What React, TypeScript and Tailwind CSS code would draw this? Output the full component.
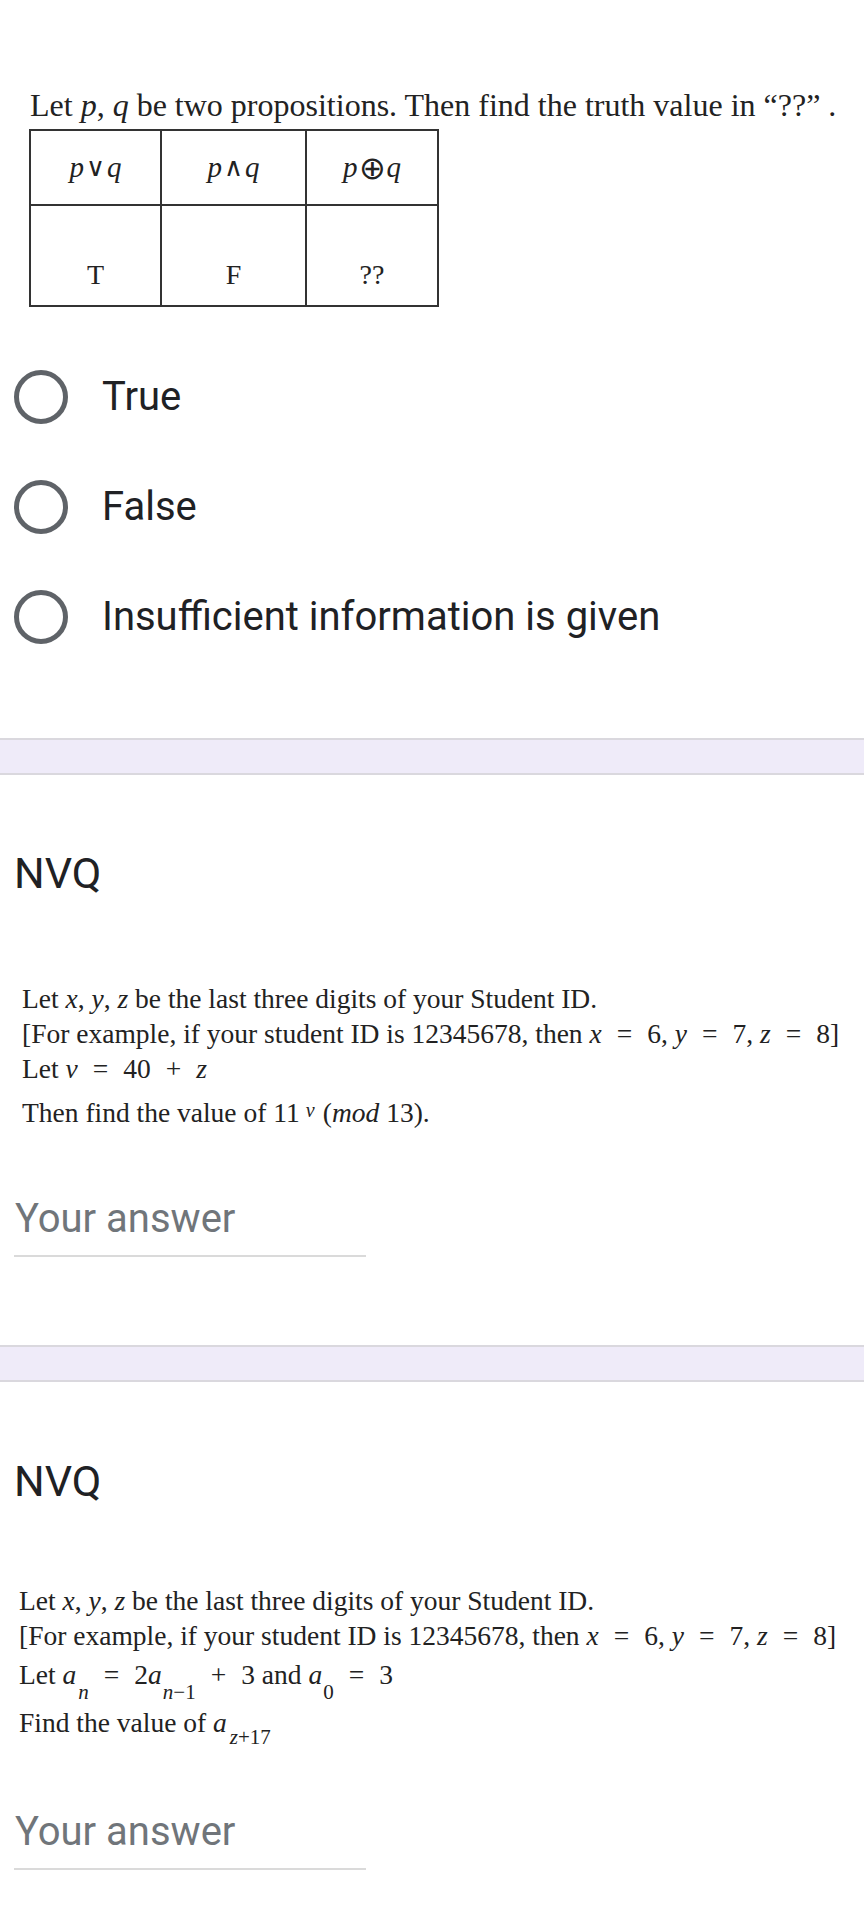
import React from "react";

const serif = "font-['Liberation_Serif','Times_New_Roman',serif]";
const sans = "font-['Roboto','Noto_Sans',sans-serif]";

function Radio({ label }: { label: string }) {
  return (
    <div className="flex items-center h-[54px]">
      <div className="w-[54px] h-[54px] rounded-full border-[5px] border-[#5f6368] shrink-0" />
      <div className={`${sans} ml-[34px] text-[40px] leading-[54px] text-[#202124]`}>{label}</div>
    </div>
  );
}

function Band() {
  return <div className="h-[37px] border-y-2 border-[#dad8de] bg-[#efebf9]" />;
}

function Answer({ className }: { className: string }) {
  return (
    <div className={`${className} ml-[14px] w-[352px] border-b-2 border-[#dadada] pb-[12px]`}>
      <div className={`${sans} text-[40px] leading-[48px] text-[#70757a] pl-[1px]`}>Your answer</div>
    </div>
  );
}

function Title({ className }: { className: string }) {
  return (
    <div className={`${className} ${sans} pl-[14px] text-[43px] leading-[52px] text-[#202124]`}>NVQ</div>
  );
}

function Op({ c }: { c: string }) {
  return <span className="mx-[15px]">{c}</span>;
}

function StudentLines() {
  return (
    <>
      <div>
        Let <i>x</i>, <i>y</i>, <i>z</i> be the last three digits of your Student ID.
      </div>
      <div>
        [For example, if your student ID is 12345678, then <i>x</i>
        <Op c="=" />6, <i>y</i>
        <Op c="=" />7, <i>z</i>
        <Op c="=" />8]
      </div>
    </>
  );
}

export default function App() {
  return (
    <div className="w-[864px] min-h-[1920px] bg-white text-[#202124] pb-[50px]">
      {/* Question 1 */}
      <div className={`${serif} pt-[87px] pl-[30px] text-[32px] leading-[36px] text-[#222]`}>
        Let <i>p</i>, <i>q</i> be two propositions. Then find the truth value in “??” .
      </div>
      <div className={`${serif} ml-[29px] mt-[6px] w-[410px] border-2 border-[#333] grid grid-cols-[131px_145px_130px] text-[#222]`}>
        <div className="h-[75px] border-r-2 border-b-2 border-[#333] flex items-center justify-center text-[29px] italic">
          p<span className="not-italic text-[26px] mx-[2px]">∨</span>q
        </div>
        <div className="h-[75px] border-r-2 border-b-2 border-[#333] flex items-center justify-center text-[29px] italic">
          p<span className="not-italic text-[26px] mx-[2px]">∧</span>q
        </div>
        <div className="h-[75px] border-b-2 border-[#333] flex items-center justify-center text-[29px] italic">
          p<span className="not-italic text-[32px] mx-[1px]">⊕</span>q
        </div>
        <div className="h-[99px] border-r-2 border-[#333] flex items-center justify-center pt-[38px] text-[28px]">T</div>
        <div className="h-[99px] border-r-2 border-[#333] flex items-center justify-center pt-[38px] text-[28px]">F</div>
        <div className="h-[99px] flex items-center justify-center pt-[38px] text-[28px]">??</div>
      </div>

      <div className="mt-[63px] pl-[14px] flex flex-col gap-[56px]">
        <Radio label="True" />
        <Radio label="False" />
        <Radio label="Insufficient information is given" />
      </div>

      <div className="mt-[94px]">
        <Band />
      </div>

      {/* Question 2 */}
      <Title className="mt-[72px]" />
      <div className={`${serif} mt-[82px] pl-[22px] text-[27.5px] leading-[35px] text-[#222]`}>
        <StudentLines />
        <div>
          Let <i>v</i>
          <Op c="=" />40
          <Op c="+" />
          <i>z</i>
        </div>
        <div className="mt-[9px]">
          Then find the value of 11
          <span className="relative inline-block w-[23px]">
            <i className="absolute left-[6px] top-[-22px] text-[20px] leading-[20px]">v</i>
          </span>
          (<i>mod</i> 13).
        </div>
      </div>

      <Answer className="mt-[65px]" />

      <div className="mt-[88px]">
        <Band />
      </div>

      {/* Question 3 */}
      <Title className="mt-[73px]" />
      <div className={`${serif} mt-[76px] pl-[19px] text-[27.5px] leading-[35px] text-[#222]`}>
        <StudentLines />
        <div className="mt-[4px]">
          Let <i>a</i>
          <sub className="text-[21px] italic relative top-[15px] ml-[2px]">n</sub>
          <Op c="=" />2<i>a</i>
          <sub className="text-[21px] relative top-[15px] ml-[1px]">
            <i>n</i>−1
          </sub>
          <Op c="+" />3 and <i>a</i>
          <sub className="text-[21px] relative top-[15px] ml-[1px]">0</sub>
          <Op c="=" />3
        </div>
        <div className="mt-[13px]">
          Find the value of <i>a</i>
          <sub className="text-[21px] relative top-[12px] ml-[3px]">
            <i>z</i>+17
          </sub>
        </div>
      </div>

      <Answer className="mt-[68px]" />
    </div>
  );
}
